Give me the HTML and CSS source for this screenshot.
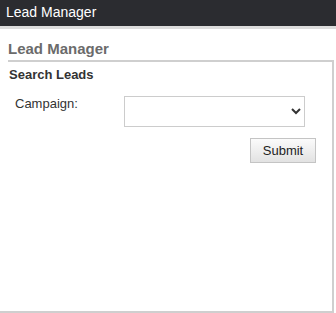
FILE: index.html
```html
<!DOCTYPE html>
<html>
<head>
<meta charset="utf-8">
<link rel="stylesheet" href="styles.css">
</head>
<body>
<div class="topbar">Lead Manager</div>
<div class="page">
  <h2 class="page-title">Lead Manager</h2>
  <div class="panel">
    <h3 class="section-title">Search Leads</h3>
    <form class="search-form">
      <label class="field-label" for="campaign">Campaign:</label>
      <select class="field-select" id="campaign"><option></option></select>
      <div class="actions">
        <button type="button" class="btn">Submit</button>
      </div>
    </form>
  </div>
</div>
</body>
</html>
```
FILE: styles.css
```css
html, body {
  margin: 0;
  padding: 0;
  height: 100%;
}
body {
  font-family: "Liberation Sans", Arial, sans-serif;
  color: #333;
  background: #fff;
  display: flex;
  flex-direction: column;
}
.topbar {
  height: 26px;
  line-height: 24px;
  background: #2b2c30;
  color: #fff;
  font-size: 14px;
  padding-left: 6px;
  border-bottom: 3px solid #dcdcdc;
  flex: none;
}
.page {
  flex: 1;
  display: flex;
  flex-direction: column;
  margin-right: 2px;
}
.page-title {
  margin: 0 0 0 8px;
  padding: 11px 0 0;
  height: 20px;
  font-size: 15px;
  line-height: 18px;
  font-weight: bold;
  color: #6b6b6b;
  border-bottom: 2px solid #cfcfcf;
}
.panel {
  flex: 1;
  border-right: 2px solid #cfcfcf;
  border-bottom: 2px solid #cfcfcf;
  padding: 5px 0 0 9px;
}
.section-title {
  margin: 0;
  font-size: 13px;
  line-height: 15px;
  font-weight: bold;
  color: #333;
}
.search-form {
  display: grid;
  grid-template-columns: 109px 181px;
  margin: 14px 0 0 6px;
  row-gap: 11px;
}
.field-label {
  font-size: 13px;
  line-height: 15px;
  color: #333;
  padding-top: 0;
}
.field-select {
  width: 181px;
  height: 31px;
  border: 1px solid #cccccc;
  border-radius: 0;
  background: #fff;
  font-family: inherit;
  font-size: 13px;
  color: #333;
}
.actions {
  grid-column: 1 / 3;
  display: flex;
  justify-content: flex-end;
  margin-right: -11px;
}
.btn {
  width: 66px;
  height: 25px;
  font-family: inherit;
  font-size: 13px;
  color: #222;
  border: 1px solid #c4c4c4;
  border-radius: 0;
  background: linear-gradient(#fbfbfb, #e2e2e2);
  padding: 0;
}
```
